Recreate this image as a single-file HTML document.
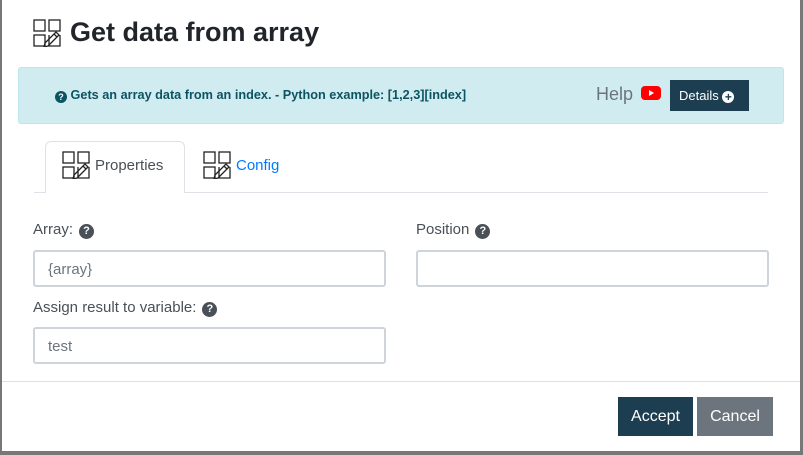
<!DOCTYPE html>
<html><head><style>
body{margin:0;width:803px;height:455px;background:#777;position:relative;overflow:hidden;font-family:"Liberation Sans",sans-serif}
.modal{position:absolute;left:2px;top:0;width:798px;height:451px;background:#fff}
.abs{position:absolute}
.ic{position:absolute}
h1{position:absolute;left:68px;top:17px;margin:0;font-size:27px;font-weight:bold;color:#212529}
.alert{position:absolute;left:16px;top:67px;width:764px;height:55px;background:#d1ecf1;border:1px solid #bee5eb;border-radius:3px}
.q{display:inline-block;width:12px;height:12px;border-radius:50%;background:#0c5460;color:#fff;font-size:9px;text-align:center;line-height:12px;font-weight:bold;vertical-align:-1px}
.lbl{position:absolute;font-size:15px;color:#495057}
.qq{display:inline-block;width:15px;height:15px;border-radius:50%;background:#495057;color:#fff;font-size:11px;text-align:center;line-height:15px;font-weight:bold;margin-left:6px;vertical-align:0}
.inp{position:absolute;border:2px solid #ced4da;border-radius:3px;box-sizing:border-box;height:37px;font-size:15px;color:#6c757d;padding:9px 13px}
.btn{position:absolute;top:397px;height:39px;color:#fff;font-size:16px;text-align:center;line-height:39px}
</style></head><body>
<div class="modal">
<svg class="ic" style="left:31px;top:19px" width="28" height="28" viewBox="0 0 28 28" fill="none" stroke="#222" stroke-width="1.3"><rect x="1" y="1" width="11" height="11"/><rect x="16" y="1" width="11" height="11"/><rect x="1" y="16" width="11" height="11"/><path d="M16 16v11h11V16"/><path d="M12 24l11-11 3 3-11 11-4 1z M21 15l3 3"/></svg>
<h1>Get data from array</h1>
<div class="alert">
<div class="abs" style="left:36px;top:20px;font-size:12.7px;font-weight:bold;color:#0c5460"><span class="q">?</span> Gets an array data from an index. - Python example: [1,2,3][index]</div>
<div class="abs" style="left:577px;top:16px;font-size:18px;color:#6c757d">Help</div>
<div class="abs" style="left:622px;top:18px;width:20px;height:14px;background:#f00;border-radius:4px"><div style="position:absolute;left:8px;top:4px;border-left:5px solid #fff;border-top:3px solid transparent;border-bottom:3px solid transparent"></div></div>
<div class="abs" style="left:651px;top:12px;width:79px;height:31px;background:#1c3e50;color:#fff;font-size:13px;line-height:31px;text-align:left;padding-left:9px;box-sizing:border-box">Details <span style="display:inline-block;width:12px;height:12px;border-radius:50%;background:#fff;color:#1c3e50;font-size:12px;line-height:12px;text-align:center;font-weight:bold;vertical-align:-1px">+</span></div>
</div>
<div class="abs" style="left:32px;top:192px;width:734px;height:1px;background:#dee2e6"></div>
<div class="abs" style="left:43px;top:141px;width:140px;height:52px;border:1px solid #dee2e6;border-bottom:none;border-radius:6px 6px 0 0;background:#fff;box-sizing:border-box"></div>
<svg class="ic" style="left:60px;top:151px" width="28" height="28" viewBox="0 0 28 28" fill="none" stroke="#222" stroke-width="1.3"><rect x="1" y="1" width="11" height="11"/><rect x="16" y="1" width="11" height="11"/><rect x="1" y="16" width="11" height="11"/><path d="M16 16v11h11V16"/><path d="M12 24l11-11 3 3-11 11-4 1z M21 15l3 3"/></svg>
<div class="abs" style="left:93px;top:157px;font-size:15px;color:#495057">Properties</div>
<svg class="ic" style="left:201px;top:151px" width="28" height="28" viewBox="0 0 28 28" fill="none" stroke="#222" stroke-width="1.3"><rect x="1" y="1" width="11" height="11"/><rect x="16" y="1" width="11" height="11"/><rect x="1" y="16" width="11" height="11"/><path d="M16 16v11h11V16"/><path d="M12 24l11-11 3 3-11 11-4 1z M21 15l3 3"/></svg>
<div class="abs" style="left:234px;top:157px;font-size:15px;color:#007bff">Config</div>
<div class="lbl" style="left:31px;top:221px">Array:<span class="qq">?</span></div>
<div class="inp" style="left:31px;top:250px;width:353px">{array}</div>
<div class="lbl" style="left:414px;top:221px">Position<span class="qq">?</span></div>
<div class="inp" style="left:414px;top:250px;width:353px"></div>
<div class="lbl" style="left:31px;top:299px">Assign result to variable:<span class="qq">?</span></div>
<div class="inp" style="left:31px;top:327px;width:353px">test</div>
<div class="abs" style="left:0;top:381px;width:798px;height:1px;background:#e0e0e0"></div>
<div class="btn" style="left:616px;width:75px;background:#1c3e50">Accept</div>
<div class="btn" style="left:695px;width:76px;background:#6c757d">Cancel</div>
</div>
</body></html>
